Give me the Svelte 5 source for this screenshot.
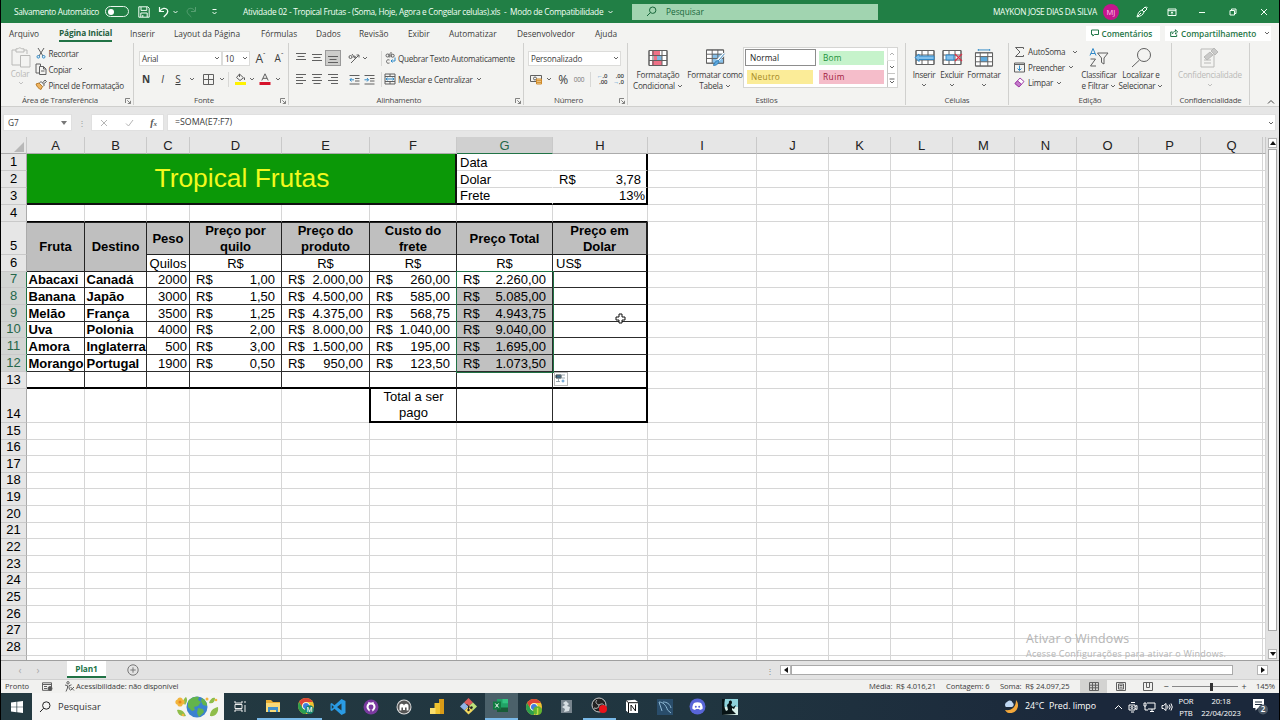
<script>
  const tabs = ['Arquivo', 'Página Inicial', 'Inserir', 'Layout da Página', 'Fórmulas', 'Dados', 'Revisão', 'Exibir', 'Automatizar', 'Desenvolvedor', 'Ajuda'];
  const columns = 'ABCDEFGHIJKLMNOPQ'.split('');
  const fruits = [
    ['Abacaxi', 'Canadá', '2000', '1,00', '2.000,00', '260,00', '2.260,00'],
    ['Banana', 'Japão', '3000', '1,50', '4.500,00', '585,00', '5.085,00'],
    ['Melão', 'França', '3500', '1,25', '4.375,00', '568,75', '4.943,75'],
    ['Uva', 'Polonia', '4000', '2,00', '8.000,00', '1.040,00', '9.040,00'],
    ['Amora', 'Inglaterra', '500', '3,00', '1.500,00', '195,00', '1.695,00'],
    ['Morango', 'Portugal', '1900', '0,50', '950,00', '123,50', '1.073,50']
  ];

  // Each cell: column, row, text, classes, column span, row span
  const cells = [];
  const put = (c, r, text, cls = '', cs = 1, rs = 1) => cells.push({ c, r, text, cls, cs, rs });
  put(1, 1, 'Tropical Frutas', 'banner', 6, 3);
  put(7, 1, 'Data', 'left noline');
  put(8, 1, '', 'edge noline');
  put(7, 2, 'Dolar', 'left noline');
  put(8, 2, '3,78', 'money edge noline');
  put(7, 3, 'Frete', 'left base');
  put(8, 3, '13%', 'right edge base');
  for (let c = 1; c < 9; c++) put(c, 4, '', 'base4');
  put(1, 5, 'Fruta', 'head', 1, 2);
  put(2, 5, 'Destino', 'head', 1, 2);
  put(3, 5, 'Peso', 'head');
  put(4, 5, 'Preço por quilo', 'head');
  put(5, 5, 'Preço do produto', 'head');
  put(6, 5, 'Custo do frete', 'head');
  put(7, 5, 'Preço Total', 'head');
  put(8, 5, 'Preço em Dolar', 'head edge');
  put(3, 6, 'Quilos', 'line center');
  for (let c = 4; c < 8; c++) put(c, 6, 'R$', 'line center');
  put(8, 6, 'US$', 'line left edge');
  fruits.forEach((f, i) => {
    const r = i + 7;
    put(1, r, f[0], 'line bold left');
    put(2, r, f[1], 'line bold left');
    put(3, r, f[2], 'line right');
    for (let c = 4; c < 8; c++) put(c, r, f[c - 1], 'line money' + (c === 7 && i ? ' picked' : ''));
    put(8, r, '', 'line edge');
  });
  for (let c = 1; c < 9; c++) put(c, 13, '', 'line base' + (c === 8 ? ' edge' : ''));
  put(6, 14, 'Total a ser pago', 'line base wrap leftedge');
  put(7, 14, '', 'line base');
  put(8, 14, '', 'line base edge');

  const filled = new Set();
  cells.forEach((k) => {
    for (let c = k.c; c < k.c + k.cs; c++) for (let r = k.r; r < k.r + k.rs; r++) filled.add(c + '-' + r);
  });
  const blanks = [];
  for (let r = 1; r < 30; r++) for (let c = 1; c < 19; c++) if (!filled.has(c + '-' + r)) blanks.push([c, r]);
  const rowNumbers = Array.from({ length: 29 }, (_, i) => i + 1);
  const apps = ['taskview', 'explorer', 'chrome', 'vscode', 'github', 'mendeley', 'powerbi', 'git', 'excel', 'chrome2', 'recycle', 'obs', 'notion', 'mysql', 'discord', 'kindle'];
</script>

{#snippet caret()}
  <svg class="caret" viewBox="0 0 6 6"><path d="M1 2l2 2 2-2" /></svg>
{/snippet}

{#snippet lines(rows)}
  <svg class="i" width="12" height="12" viewBox="0 0 12 12">
    {#each rows as [x1, x2, y]}<path d="M{x1} {y}H{x2}" />{/each}
  </svg>
{/snippet}

{#snippet launcher()}
  <svg class="launcher" viewBox="0 0 6 6"><path d="M.5 5V.5H5M2.3 2.3l3 3M5.5 2.8v2.7H2.8" /></svg>
{/snippet}

{#snippet chrome(badge, letter, ink)}
  <svg width="18" height="18" viewBox="0 0 18 18">
    <circle cx="9" cy="9" r="8" fill="#f1c232" />
    <path d="M2.1 5A8 8 0 0 1 15.9 5H9a4 4 0 0 0-3.6 5.6z" fill="#dc4437" />
    <path d="M2.1 5A8 8 0 0 0 8.5 17l3.5-6a4 4 0 0 1-6.5-.2z" fill="#2c9e4f" />
    <circle cx="9" cy="9" r="3.8" fill="#fff" /><circle cx="9" cy="9" r="3" fill="#3f7de0" />
    <circle cx="12.6" cy="12.6" r="4.4" fill={badge} />
    <text x="12.6" y="15" text-anchor="middle" font-size="6.5" fill={ink}>{letter}</text>
  </svg>
{/snippet}

<div class="window">
  <header class="titlebar">
    <span class="autosave">Salvamento Automático</span>
    <span class="toggle"><i></i></span>
    <svg width="12" height="12" viewBox="0 0 12 12"><path d="M.8.8h9l1.4 1.4v9H.8zM3 1v3.4h5.8V1M2.8 11V7h6.4v4M4.8 9v2" /></svg>
    <svg width="12" height="12" viewBox="0 0 12 12"><path d="M1.5 1v4.5H6M1.7 5.2C4 2 7.5 1.5 9.2 3.6c2 2.6-.8 4.8-3.5 7.4" stroke-width="1.2" /></svg>
    {@render caret()}
    <svg class="faded" width="12" height="12" viewBox="0 0 12 12"><path d="M10.5 1v4.5H6M10.3 5.2C8 2 4.5 1.5 2.8 3.6c-2 2.6.8 4.8 3.5 7.4" /></svg>
    <svg width="7" height="8" viewBox="0 0 7 8"><path d="M1.5 1.5h4M1.5 4l2 2 2-2" /></svg>
    <span class="doc">Atividade 02 - Tropical Frutas - (Soma, Hoje, Agora e Congelar celulas).xls&nbsp; -&nbsp; Modo de Compatibilidade</span>
    {@render caret()}
    <div class="find">
      <svg width="11" height="11" viewBox="0 0 11 11"><circle cx="6.7" cy="4.2" r="3.2" /><path d="M4.4 6.6L1 10" /></svg>
      <span>Pesquisar</span>
    </div>
    <span class="user">MAYKON JOSE DIAS DA SILVA</span>
    <span class="avatar">MJ</span>
    <svg width="12" height="12" viewBox="0 0 12 12"><path d="M1 11c1-4 2-6 5-7l2 2c-1 3-3 4-7 5zM6 4l3-3 2 2-3 3M2 10l3-3M10 .5l1.5 1.5" /></svg>
    <svg width="10" height="10" viewBox="0 0 10 10"><path d="M1 2h8v6.5H1zM1 3.7h8M5 7.5V5M3.8 6L5 4.9 6.2 6" /></svg>
    <svg width="8" height="8" viewBox="0 0 8 8"><path d="M1 4.5h6" /></svg>
    <svg width="8" height="8" viewBox="0 0 8 8"><path d="M1 2.5h4.5V7H1zM2.5 2.5V1H7v4.5H5.5" /></svg>
    <svg class="close" width="8" height="8" viewBox="0 0 8 8"><path d="M1 1l6 6M7 1L1 7" /></svg>
  </header>

  <nav class="tabs">
    {#each tabs as tab, i}<span class:active={i === 1}>{tab}</span>{/each}
    <b class="pill"><svg width="8" height="8" viewBox="0 0 8 8"><path d="M.5 1h7v4.5H3.5L1.8 7V5.5H.5z" /></svg>Comentários</b>
    <b class="pill share"><svg width="8" height="8" viewBox="0 0 8 8"><path d="M2.5 3H.7v4.5h6V5.5M2.5 5c.3-2 1.5-2.7 3-2.7V.7L7.6 3 5.5 5V3.6" /></svg>Compartilhamento {@render caret()}</b>
  </nav>

  <section class="ribbon">
    <div class="group clip">
      <div class="body">
        <div class="paste">
          <svg width="20" height="21" viewBox="0 0 20 21"><path d="M5 3H1v15h8M13 3h3v4M5 1.8h2C7.5.5 10 .5 10.5 1.8H13V5H5zM9.5 8.5H19V20H9.5z" /></svg>
          <span>Colar</span>{@render caret()}
        </div>
        <div class="stack">
          <span><svg class="i" width="12" height="12" viewBox="0 0 12 12"><path d="M3 1l5 8M9 1L4 9" /><g class="blue"><circle cx="3.3" cy="9.8" r="1.3" /><circle cx="8.7" cy="9.8" r="1.3" /></g></svg>Recortar</span>
          <span><svg class="i" width="12" height="12" viewBox="0 0 12 12"><path d="M4 10H1V1h4.5v2M4.5 3.5h4L11 6v5.5H4.5zM8.5 3.5V6H11M6 8h3.5" /></svg>Copiar {@render caret()}</span>
          <span><svg class="i" width="12" height="12" viewBox="0 0 12 12"><path d="M1 5l3-1 3.5 3.5-1.5 3C3.5 9.5 2 8 1 5z" fill="#efb45f" stroke="#b97d2c" /><path d="M4.5 4L6 2.5l3.5 3.5L8 7.5M7.5 4l2.5-3 1.5 1.5L8.5 5" /></svg>Pincel de Formatação</span>
        </div>
      </div>
      <footer><span>Área de Transferência</span>{@render launcher()}</footer>
    </div>

    <div class="group font">
      <div class="body rows">
        <div class="r1">
          <span class="select">Arial {@render caret()}</span><span class="select">10 {@render caret()}</span>
          <span class="big">A<sup>ˆ</sup></span><span class="small">A<sup>ˇ</sup></span>
        </div>
        <div class="r2">
          <b>N</b><i>I</i><u>S</u>{@render caret()}
          <svg class="i" width="11" height="11" viewBox="0 0 11 11"><path d="M.5.5h10v10H.5zM5.5.5v10M.5 5.5h10" /></svg>{@render caret()}
          <em></em>
          <svg class="i" width="11" height="12" viewBox="0 0 11 12"><path d="M4.5 1L8.5 4.8 5 7.5 1.5 4.5zM4.5 1v3M9.5 4.5v2.5" /><path d="M0 10.5h11" stroke="#fff200" stroke-width="3" /></svg>{@render caret()}
          <svg class="i" width="12" height="12" viewBox="0 0 12 12"><path d="M2.8 7.5L6 .8l3.2 6.7M4 5.3h4" /><path d="M.5 10.5h11" stroke="#d6132b" stroke-width="3" /></svg>{@render caret()}
        </div>
      </div>
      <footer><span>Fonte</span>{@render launcher()}</footer>
    </div>

    <div class="group align">
      <div class="body rows">
        <div class="r1">
          {@render lines([[1, 11, 1.5], [2.5, 9.5, 4.5], [1, 11, 7.5]])}
          {@render lines([[1, 11, 2.5], [2.5, 9.5, 5.5], [1, 11, 8.5]])}
          <span class="on">{@render lines([[1, 11, 4.5], [2.5, 9.5, 7.5], [1, 11, 10.5]])}</span>
          <svg class="i shift" width="12" height="12" viewBox="0 0 12 12"><circle cx="2.5" cy="5" r="1.5" /><path d="M4 2l3 4M7 6.5c2-2-1-3.5-2-1M3 11l8-8M8.5 3H11v2.5" /></svg>{@render caret()}
          <em></em>
          <svg class="i" width="11" height="12" viewBox="0 0 11 12"><circle cx="2.5" cy="3.5" r="1.5" /><path d="M4.2 1.5v4M6 0v5.2" /><circle cx="7.7" cy="3.7" r="1.5" /><path d="M4.5 8c-4-1.5-4 4.5 0 3" /><g class="blue"><path d="M10 5.5v3.5H6M7.5 7.5L6 9l1.5 1.5" /></g></svg>
          <span>Quebrar Texto Automaticamente</span>
        </div>
        <div class="r2">
          {@render lines([[1, 11, 1.5], [1, 8, 4.5], [1, 11, 7.5], [1, 8, 10.5]])}
          {@render lines([[1, 11, 1.5], [2.5, 9.5, 4.5], [1, 11, 7.5], [2.5, 9.5, 10.5]])}
          {@render lines([[1, 11, 1.5], [4, 11, 4.5], [1, 11, 7.5], [4, 11, 10.5]])}
          <svg class="i shift" width="11" height="11" viewBox="0 0 11 11"><path d="M.5 1.5h10M6 4.5h4.5M6 7h4.5M.5 10h10" /><g class="blue"><path d="M5 5.8H1M2.5 4L1 5.8l1.5 1.7" /></g></svg>
          <svg class="i" width="11" height="11" viewBox="0 0 11 11"><path d="M.5 1.5h10M6 4.5h4.5M6 7h4.5M.5 10h10" /><g class="blue"><path d="M.5 5.8H4.5M3 4l1.5 1.8L3 7.5" /></g></svg>
          <em></em>
          <svg class="i" width="12" height="12" viewBox="0 0 12 12"><path d="M1 1h10v10H1zM1 3.5h10M1 8.5h10M6 1v2.5M6 8.5V11" /><g class="blue"><path d="M2 6h8M3.5 4.7L2 6l1.5 1.3M8.5 4.7L10 6 8.5 7.3" /></g></svg>
          <span>Mesclar e Centralizar</span>{@render caret()}
        </div>
      </div>
      <footer><span>Alinhamento</span>{@render launcher()}</footer>
    </div>

    <div class="group number">
      <div class="body rows">
        <div class="r1"><span class="select">Personalizado {@render caret()}</span></div>
        <div class="r2">
          <svg class="i" width="13" height="11" viewBox="0 0 13 11"><path d="M.5 1.5h11v6H.5z" /><circle cx="5" cy="4.5" r="1.5" /><path d="M6.5 5h5v5h-5zM6.5 6.7h5M6.5 8.4h5" fill="#f5d9a4" stroke="#cf8a2a" /></svg>{@render caret()}
          <span class="pct">%</span><span class="zeros">000</span>
          <em></em>
          <span class="dec"><s>←</s>,0<br />,00</span><span class="dec">,00<br /><s>→</s>,0</span>
        </div>
      </div>
      <footer><span>Número</span>{@render launcher()}</footer>
    </div>

    <div class="group styles">
      <div class="body">
        <div class="tool">
          <svg class="i" width="20" height="17" viewBox="0 0 20 17"><path d="M1 1h18v15H1z" fill="#fff" /><path d="M4 1h8v5H4zM6 6h7v5H6zM4 11h10v5H4z" fill="#ef7187" stroke="none" /><path d="M9 6h5v5H9z" fill="#80b7df" stroke="none" /><path d="M1 1h18v15H1zM1 6h18M1 11h18M5 1v15M14 1v15" /></svg>
          <span>Formatação</span><span>Condicional {@render caret()}</span>
        </div>
        <div class="tool">
          <svg class="i" width="21" height="19" viewBox="0 0 21 19"><path d="M1 1h18v14H1z" fill="#fff" /><path d="M7 5h12v10H7z" fill="#88c1ea" stroke="none" /><path d="M1 1h18v14H1zM1 5.5h18M1 10h18M7 1v14M13 1v14" /><path d="M20 5l-8 8" stroke="#fff" stroke-width="3" /><path d="M20 5l-7 8M12.5 12c2 1 2 2 .5 3.5-2 2-4 2-5 1.5 2-1 1.5-4 4.5-5z" fill="#5ba5dc" stroke="#2f7fb8" /></svg>
          <span>Formatar como</span><span>Tabela {@render caret()}</span>
        </div>
        <div class="gallery">
          <span class="normal">Normal</span><span class="good">Bom</span>
          <span class="neutral">Neutro</span><span class="bad">Ruim</span>
          <div class="steps"><i class="off"><svg class="caret" viewBox="0 0 6 6"><path d="M1 4l2-2 2 2" /></svg></i><i>{@render caret()}</i><i><svg class="caret" viewBox="0 0 6 6"><path d="M.5 1h5M1 3l2 2 2-2" /></svg></i></div>
        </div>
      </div>
      <footer><span>Estilos</span></footer>
    </div>

    <div class="group cellsg">
      <div class="body">
        <div class="tool">
          <svg class="i" width="21" height="17" viewBox="0 0 21 17"><path d="M2 1h18v14H2z" fill="#fff" /><path d="M2 1h18v14H2zM2 5.5h18M2 10.5h18M8 1v14M14 1v14" /><path d="M1 8l4-3.5v2h15v3.5H5v2z" fill="#82c0ec" stroke="#2f87c7" /></svg>
          <span>Inserir</span>{@render caret()}
        </div>
        <div class="tool">
          <svg class="i" width="21" height="17" viewBox="0 0 21 17"><path d="M1 1h18v14H1z" fill="#fff" /><path d="M1 1h18v14H1zM1 5.5h18M1 10.5h18M7 1v14M13 1v14" /><path d="M4 5.5h8v5H4z" fill="#82c0ec" stroke="#2f87c7" /><path d="M13 4.5l7 7M20 4.5l-7 7" stroke="#d9344a" stroke-width="1.2" /></svg>
          <span>Excluir</span>{@render caret()}
        </div>
        <div class="tool">
          <svg class="i" width="20" height="19" viewBox="0 0 20 19"><path d="M4 1h12M4 0v2M16 0v2" stroke="#2f87c7" /><path d="M1 4h18v14H1z" fill="#fff" /><path d="M6 8h8v5.5H6z" fill="#5da9dd" stroke="none" /><path d="M1 4h18v14H1zM1 8h18M1 13.5h18M6 4v14M14 4v14" /></svg>
          <span>Formatar</span>{@render caret()}
        </div>
      </div>
      <footer><span>Células</span></footer>
    </div>

    <div class="group edit">
      <div class="body">
        <div class="stack">
          <span><svg class="i" width="11" height="12" viewBox="0 0 11 12"><path d="M9.5 3V1.5H1.5L6 6l-4.5 4.5h8V9" /></svg>AutoSoma &nbsp;{@render caret()}</span>
          <span><svg class="i" width="11" height="11" viewBox="0 0 11 11"><path d="M.5 1h10v9H.5zM.5 2.5h10" /><g class="blue"><path d="M5.5 3.5V8.5M3.5 6.5l2 2 2-2" /></g></svg>Preencher {@render caret()}</span>
          <span><svg class="i" width="11" height="11" viewBox="0 0 11 11"><path d="M6 1l4 3.5-5 5.5-4-3.5z" fill="#fff" stroke="#a03fa8" /><path d="M3.5 3.8l4 3.4L5 10 1 6.5z" fill="#c47bca" stroke="#a03fa8" /></svg>Limpar {@render caret()}</span>
        </div>
        <div class="tool">
          <svg class="i" width="20" height="20" viewBox="0 0 20 20"><path d="M1 8l3-7 3 7M2 6h4" stroke="#2f87c7" /><path d="M1.5 11.5h5l-5 7h5.5" /><path d="M8.5 5.5h10.5l-4 5v6l-2.5-1.5v-4.5z" /></svg>
          <span>Classificar</span><span>e Filtrar {@render caret()}</span>
        </div>
        <div class="tool">
          <svg class="i" width="21" height="20" viewBox="0 0 21 20"><circle cx="13" cy="7.5" r="6.5" /><path d="M8.5 12.5L1 19.5" /></svg>
          <span>Localizar e</span><span>Selecionar {@render caret()}</span>
        </div>
      </div>
      <footer><span>Edição</span></footer>
    </div>

    <div class="group conf">
      <div class="body">
        <div class="tool">
          <svg class="i" width="20" height="21" viewBox="0 0 20 21"><path d="M1 2h13v18H1zM4 13h7M4 16h7" /><path d="M4 10l6-5 3 3-6 5zM11 4l3-3 4 4-3 3z" fill="#c9c9c8" /></svg>
          <span>Confidencialidade</span>{@render caret()}
        </div>
      </div>
      <footer><span>Confidencialidade</span></footer>
    </div>
    <svg class="collapse" viewBox="0 0 8 6"><path d="M1 4.5l3-3 3 3" /></svg>
  </section>

  <section class="formula">
    <span class="namebox">G7<svg viewBox="0 0 6 4"><path d="M0 0h6L3 4z" /></svg></span>
    <span class="grip">⋮</span>
    <span class="fx">
      <svg width="8" height="8" viewBox="0 0 8 8"><path d="M1 1l6 6M7 1L1 7" /></svg>
      <svg width="9" height="8" viewBox="0 0 9 8"><path d="M1 4.5l2.5 2.5L8 1" /></svg>
      <i>f<small>x</small></i>
    </span>
    <span class="input">=SOMA(E7:F7){@render caret()}</span>
  </section>

  <section class="sheet">
    <div class="heads">
      <span class="corner"><svg viewBox="0 0 10 10"><path d="M10 0v10H0z" /></svg></span>
      {#each columns as c}<span class:hot={c === 'G'}>{c}</span>{/each}<span></span>
    </div>
    <div class="rownums">
      {#each rowNumbers as n}<span class:hot={n > 6 && n < 13}>{n === 29 ? '' : n}</span>{/each}
    </div>
    <div class="grid">
      {#each blanks as [c, r]}<div class="cell" style="grid-area:{r}/{c}"></div>{/each}
      {#each cells as k}
        <div class="cell {k.cls}" style="grid-area:{k.r}/{k.c}/span {k.rs}/span {k.cs}">
          {#if k.cls.includes('money')}<span>R$</span>{/if}<span>{k.text}</span>
        </div>
      {/each}
      <div class="selection"></div>
      <div class="autofill"><svg width="11" height="11" viewBox="0 0 11 11"><path d="M1 2h5v3H1z" fill="#3f6f8f" /><path d="M1 2h9M1 5h9M1 8.5h4M6 2v3M3.5 5v4" stroke="#8795a0" fill="none" /><path d="M6.5 8h3M8 6.5v3" stroke="#2f7fc0" /></svg></div>
      <svg class="cursor" viewBox="0 0 11 11"><path d="M4 1h3v3h3v3H7v3H4V7H1V4h3z" /></svg>
      <div class="activate"><p>Ativar o Windows</p><small>Acesse Configurações para ativar o Windows.</small></div>
    </div>
    <div class="vscroll"><i><svg viewBox="0 0 6 4"><path d="M0 4h6L3 0z" /></svg></i><b></b><i><svg viewBox="0 0 6 4"><path d="M0 0h6L3 4z" /></svg></i></div>
  </section>

  <section class="sheettabs">
    <span class="nav">‹</span><span class="nav">›</span><b>Plan1</b>
    <svg class="plus" width="12" height="12" viewBox="0 0 12 12"><circle cx="6" cy="6" r="5.2" /><path d="M3.3 6h5.4M6 3.3v5.4" /></svg>
    <span class="dots">⋮</span>
    <div class="hscroll"><i><svg viewBox="0 0 4 6"><path d="M4 0v6L0 3z" /></svg></i><b></b><i class="last"><svg viewBox="0 0 4 6"><path d="M0 0v6l4-3z" /></svg></i></div>
  </section>

  <footer class="status">
    <span>Pronto</span>
    <svg class="i" width="11" height="10" viewBox="0 0 11 10"><path d="M.5.8h9v7.5h-9zM.5 2.5h9M2 4.5h3M2 6.5h3" /><circle cx="8" cy="6.5" r="2" fill="#555" /></svg>
    <svg class="i" width="11" height="11" viewBox="0 0 11 11"><circle cx="4" cy="1.8" r="1.2" /><path d="M1 4l2.5.7V7L2 10.5M7.5 3.8L5 4.7V7l1.2 2M6.5 6l3.5 3.5M10 6L6.5 9.5" /></svg>
    <span class="acc">Acessibilidade: não disponível</span>
    <span>Média: &nbsp;R$ 4.016,21</span><span>Contagem: 6</span><span>Soma: &nbsp;R$ 24.097,25</span>
    <span class="view on"><svg class="i" width="10" height="9" viewBox="0 0 10 9"><path d="M.5.5h9v8h-9zM.5 3.2h9M.5 5.8h9M3.5.5v8M6.5.5v8" /></svg></span>
    <span class="view"><svg class="i" width="10" height="9" viewBox="0 0 10 9"><path d="M.5.5h9v8h-9zM2.5 2h5v5h-5zM3.5 3.5h3M3.5 5.2h3" /></svg></span>
    <span class="view"><svg class="i" width="10" height="9" viewBox="0 0 10 9"><path d="M.5.5h9v8h-9zM3.5.5v5h3v-5" /></svg></span>
    <span class="sign">−</span><span class="zoom"><i></i></span><span class="sign">+</span>
    <span>145%</span>
  </footer>

  <footer class="taskbar">
    <span class="start"><svg width="12" height="12" viewBox="0 0 12 12"><path d="M0 1.6l5.5-.8v4.9H0zM6.2.7L12 0v5.7H6.2zM0 6.3h5.5v4.9L0 10.4zM6.2 6.3H12V12l-5.8-.8z" fill="#fff" /></svg></span>
    <div class="search">
      <svg width="12" height="12" viewBox="0 0 12 12"><circle cx="7.3" cy="4.5" r="3.7" fill="none" stroke="#222" /><path d="M4.6 7.3L1 11" stroke="#222" /></svg>
      <span>Pesquisar</span>
      <svg class="earth" width="46" height="24" viewBox="0 0 46 24">
        <g fill="#8fbd4a"><path d="M3 15c4-1 7 1 9 6-5 1-8-1-9-6zM12 2c-3 2-3 5-1 8 2-3 3-5 1-8zM36 21c0-5 3-8 8-9 1 6-3 10-8 9zM35 8c1-4 4-6 6-5 0 4-2 6-6 5z" /></g>
        <g fill="#f2b53c"><circle cx="4" cy="7" r="2.6" /><circle cx="8" cy="7" r="2.6" /><circle cx="6" cy="5" r="2.6" /><circle cx="6" cy="9" r="2.6" /><circle cx="33" cy="4" r="1.5" /><circle cx="42" cy="5" r="1.3" /><circle cx="9" cy="20" r="1.3" /></g>
        <circle cx="6" cy="7" r="1.5" fill="#e88420" />
        <circle cx="23" cy="12" r="10.5" fill="#3b82cf" />
        <path d="M14 6c3-4 8-5 11-4l-1 3 3 2-3 4-4 1 1 3-3 1-4-4zM28 3c3 2 5 4 5 8l-4-1-2-4zM24 13l5 1 1 3-5 5-2-4z" fill="#63b44b" />
      </svg>
    </div>
    {#each apps as app}
      <span class="app {app}">
        {#if app === 'taskview'}
          <svg width="13" height="13" viewBox="0 0 13 13"><path d="M1 1v2h7V1M1 12v-2h7v2M1 4.5h7v4H1zM11 1v2M11 5v7" /></svg>
        {:else if app === 'explorer'}
          <svg width="16" height="14" viewBox="0 0 16 14"><path d="M1 1h5l2 2h7v10H1z" fill="#e9ad34" /><path d="M1 4h14v9H1z" fill="#f9da78" /><path d="M3 8h10v5h-2v-2H5v2H3z" fill="#4191cb" /></svg>
        {:else if app === 'chrome'}
          {@render chrome('#16836d', 'M', '#fff')}
        {:else if app === 'chrome2'}
          {@render chrome('#63b52f', 'J', '#f7ef5b')}
        {:else if app === 'vscode'}
          <svg width="16" height="16" viewBox="0 0 16 16"><path d="M11.5 0L15.5 2v12l-4 2L4.5 9.7 1.8 12 .5 11.2v-6.5L1.8 4l2.7 2.3zM11.5 4.5L7 8l4.5 3.5zM1.8 6v4L4 8z" fill="#2a9be4" fill-rule="evenodd" /></svg>
        {:else if app === 'github'}
          <svg width="16" height="16" viewBox="0 0 16 16"><circle cx="8" cy="8" r="7.5" fill="#7a3aa0" /><path d="M5.2 4.3l.3-1.6 1.5.9h2l1.5-.9.3 1.6a4.6 4.6 0 0 1-.6 7.6l-.9.5V10.3H6.7v2.1l-.9-.5a4.6 4.6 0 0 1-.6-7.6z" fill="#fff" /><ellipse cx="8" cy="8" rx="2.5" ry="2.4" fill="#7a3aa0" /></svg>
        {:else if app === 'mendeley'}
          <svg width="16" height="16" viewBox="0 0 16 16"><circle cx="8" cy="8" r="7.500" fill="#ddd" /><circle cx="8" cy="8" r="6.500" fill="#555" /><path d="M3.500 11.500V7.500a2.300 2.300 0 0 1 4.500-1a2.300 2.300 0 0 1 4.500 1v4h-1.900V8.500H9v2.500H7V8.500H5.400v3z" fill="#fff" /></svg>
        {:else if app === 'powerbi'}
          <svg width="15" height="17" viewBox="0 0 15 17"><path d="M10 1h5v15h-5z" fill="#d99b17" /><path d="M5.5 5H11v11H5.5z" fill="#efc32f" /><path d="M1 10h5.5v6H1z" fill="#f9df6e" /></svg>
        {:else if app === 'git'}
          <svg width="17" height="17" viewBox="0 0 17 17"><path d="M8.5 0L13 4.5 8.5 8.5 4 4.5z" fill="#dd5b5b" /><path d="M4 4.5l4.5 4L4.5 12.5 0 8.5z" fill="#90b4e7" /><path d="M13 4.5l4 4-4 4-4.5-4z" fill="#bee27a" /><path d="M8.5 8.5l4.5 4-4.5 4-4-4z" fill="#f1d85e" /><path d="M6.5 6l5 5M8.5 8v5" stroke="#222" /><circle cx="8.5" cy="12" r="1.2" fill="#222" /><circle cx="11.5" cy="9.5" r="1.2" fill="#222" /></svg>
        {:else if app === 'excel'}
          <svg width="16" height="15" viewBox="0 0 16 15"><path d="M4 1h11v13H4z" fill="#21a366" /><path d="M9.5 1H15v4.3H9.5z" fill="#33c481" /><path d="M4 9.5h11V14H4z" fill="#185c37" /><path d="M0 3.5h8v8H0z" fill="#107c41" /><path d="M2.3 5.5l3.3 4M5.6 5.5l-3.3 4" stroke="#fff" /></svg>
        {:else if app === 'recycle'}
          <svg width="13" height="15" viewBox="0 0 13 15"><path d="M1 1h11v13H1z" fill="#78858e" /><path d="M6 2l3 3-2 2 3 1-1 4-5 1 1-3-3-2 3-2-2-2z" fill="#d7dfe3" /></svg>
        {:else if app === 'obs'}
          <svg width="17" height="17" viewBox="0 0 17 17"><circle cx="8" cy="8" r="7" fill="#222" stroke="#ccc" /><path d="M8 8c-3-1-4-3-2-5M8 8c0 3-2 4-5 3M8 8c3-2 5-1 5 1" fill="none" stroke="#bbb" /><circle cx="12" cy="12" r="4" fill="#e9131a" /></svg>
        {:else if app === 'notion'}
          <svg width="14" height="15" viewBox="0 0 14 15"><path d="M1 1.5l9-.7 3 2.2v11H3.5L1 11.5z" fill="#fff" /><path d="M1 1.5l2.5 2.2H13M3.5 3.7V14M6 12V6l4.5 6V5.5" fill="none" stroke="#111" /></svg>
        {:else if app === 'mysql'}
          <svg width="16" height="16" viewBox="0 0 16 16"><path d="M0 0h16v16H0z" fill="#294d6b" /><path d="M2 3c4 0 7 3 8.5 8l3.5 3M2 3l3 9M6 3c4 0 7 2 8 6" fill="none" stroke="#8db8d4" /></svg>
        {:else if app === 'discord'}
          <svg width="17" height="17" viewBox="0 0 17 17"><circle cx="8.5" cy="8.5" r="8" fill="#5865d8" /><path d="M5 5c2-1 5-1 7 0 1.5 2 2 4.5 1.5 6L11 12l-1-1H7l-1 1-2.5-1C3 9.500 3.500 7 5 5z" fill="#fff" /><circle cx="6.8" cy="8.7" r="1" fill="#5865d8" /><circle cx="10.2" cy="8.7" r="1" fill="#5865d8" /></svg>
        {:else}
          <svg width="16" height="16" viewBox="0 0 16 16"><path d="M0 0h16v16H0z" fill="#8ed3dc" /><path d="M0 8h16v8H0z" fill="#d6efe9" /><path d="M0 16V0h3c-1 5-1 9 1 12l2-1-1-5 2-2c-1-2 2-4 3-1 0 2-1 2-1 3l2 2 3-2-2 4-2-1v2l4 4z" fill="#071315" /></svg>
        {/if}
      </span>
    {/each}
    <div class="tray">
      <svg width="16" height="16" viewBox="0 0 16 16"><path d="M12 1c5 6 0 14-7 13-2 0-3-2-4-3 7 1 11-3 11-10z" fill="#f3a83b" /><path d="M2 8a3 3 0 0 1 1-5 3 3 0 0 1 5.5.5A2.5 2.5 0 0 1 8 8z" fill="#bfd7f2" /></svg>
      <span class="weather">24°C &nbsp;Pred. limpo</span>
      <svg class="w" width="9" height="8" viewBox="0 0 9 8"><path d="M1 6l3.5-3.5L8 6" /></svg>
      <svg class="w" width="10" height="12" viewBox="0 0 10 12"><path d="M3 1.5h4M1 4h6v5H1zM7 5.5l2-1v4l-2-1M3 11h3" /><circle cx="4" cy="6.5" r="1" /></svg>
      <svg class="w" width="13" height="12" viewBox="0 0 13 12"><path d="M4 2h8v6H5M7 10.5h4M9 8v2M1 2h2v3H1zM2 5v4h3" /></svg>
      <svg class="w" width="12" height="10" viewBox="0 0 12 10"><path d="M1 3.5h1.5L5 1.5v7l-2.5-2H1zM6.5 3.5q1 1.5 0 3M8.2 2.5q2 2.5 0 5M10 1.5q2.5 3.5 0 7" /></svg>
      <span class="two">POR<br />PTB</span>
      <span class="two">20:18<br />22/04/2023</span>
      <svg width="17" height="17" viewBox="0 0 17 17"><path d="M1 1h11v9H6l-2.5 2.5V10H1z" fill="#fff" /><path d="M3 3.5h7v1H3zM3 6h7v1H3z" fill="#1b2a3b" /><circle cx="11" cy="11.5" r="5" fill="#4b5866" /><text x="11" y="14.3" font-size="8" text-anchor="middle" fill="#fff">2</text></svg>
    </div>
  </footer>
</div>

<style>
  :global(body) { margin: 0; background: #000; }
  .window { width: 1278px; height: 720px; padding: 0 1px; overflow: hidden; background: #000; font: 8.3px/11px "Open Sans", "Noto Sans", sans-serif; color: #3b3b3b; display: grid; grid-template-columns: 1278px; grid-template-rows: 23px 20px 64px 30px 523px 20px 13px 27px; white-space: nowrap; }
  svg { display: block; fill: none; stroke: currentColor; stroke-width: 1; flex: none; }
  .i { stroke: #606060; }
  .i .blue { stroke: #2f8bc9; }
  .caret { width: 6px; height: 6px; stroke: #555; stroke-width: .9; }
  text { stroke: none; font-family: "Open Sans", sans-serif; font-weight: 600; }

  .titlebar { background: #217f45; color: #f2fff5; display: flex; align-items: center; }
  .titlebar > * { flex: none; }
  .titlebar .caret { stroke: #fff; width: 7px; }
  .autosave { width: 86px; margin-left: 13px; letter-spacing: -.34px; }
  .toggle { width: 22px; height: 9px; border: 1px solid #e8f6ec; border-radius: 6px; margin: 0 9px 0 5px; display: flex; align-items: center; }
  .toggle i { width: 6px; height: 6px; border-radius: 50%; background: #fff; margin-left: 2px; }
  .toggle + svg + svg { margin: 0 2px 0 8px; }
  .faded { opacity: .25; margin-left: 6px; }
  .faded + svg { margin-left: 14px; }
  .doc { width: 364px; margin: 0 0 0 25px; letter-spacing: -.296px; }
  .find { box-sizing: border-box; width: 246px; height: 16px; margin-left: 18px; padding-left: 14px; background: #a1d4b0; color: #17663a; display: flex; align-items: center; gap: 9px; }
  .user { width: 104px; margin-left: 115px; letter-spacing: -.34px; }
  .avatar { width: 16px; height: 16px; border-radius: 50%; background: #c4158c; color: #ffc6ef; font-size: 7.5px; line-height: 16px; text-align: center; margin: 0 17px 0 6px; }
  .avatar + svg + svg { margin-left: 19px; }
  .avatar + svg + svg + svg { margin-left: 21px; }
  .avatar + svg + svg + svg + svg { margin-left: 23px; }
  .titlebar > .close { margin-left: 23px; }

  .tabs { background: #f3f3f1; display: grid; grid-template-columns: 50px 71px 44px 87px 55px 43px 49px 41px 68px 78px 490.5px 79.5px 106px; padding-left: 8px; align-items: center; }
  .tabs > span { justify-self: start; height: 19px; line-height: 19px; }
  .tabs > .active { font-weight: 700; color: #25603f; border-bottom: 2px solid #217346; height: 15px; margin-top: 0; line-height: 15px; letter-spacing: -.15px; }
  .pill { box-sizing: border-box; width: 74px; height: 15px; background: #fff; color: #1f7647; font-weight: 600; display: flex; align-items: center; gap: 3px; padding-left: 5px; letter-spacing: -.05px; }
  .share { width: 106px; }
  .share .caret { margin-left: 5px; }

  .ribbon { background: #f3f3f1; box-sizing: border-box; border-bottom: 1px solid #cfcfcd; display: grid; grid-template-columns: 133px 155px 235px 104px 278px 103px 163px 78px 29px; font-size: 8.1px; letter-spacing: -.22px; }
  .group { box-sizing: border-box; height: 62px; border-right: 1px solid #d0d0ce; display: grid; grid-template: 52px 10px / 100%; }
  .group footer { text-align: center; font-size: 7.9px; line-height: 11px; color: #4b4b4b; display: flex; }
  .group footer span { flex: 1; }
  .launcher { width: 6px; height: 6px; stroke: #666; stroke-width: .8; margin: 3px 2px 0 6px; }
  .body { display: flex; }
  .paste { width: 34px; padding: 4px 0 0 4px; box-sizing: border-box; display: flex; flex-direction: column; align-items: center; color: #b9b9b7; }
  .paste svg { margin-left: 2px; }
  .paste .caret { stroke: #bbb; margin-top: 1px; }
  .stack { display: flex; flex-direction: column; padding-top: 2px; }
  .stack > span { height: 16px; display: flex; align-items: center; gap: 1.5px; }
  .stack .caret { margin-left: 4px; }
  .clip .stack { letter-spacing: -.28px; }
  .rows { flex-direction: column; padding-top: 7px; }
  .rows > div { height: 16px; display: grid; align-items: center; justify-items: center; justify-content: start; }
  .rows > .r2 { margin-top: 5px; }
  .rows em { width: 1px; height: 15px; background: #d8d8d6; }
  .rows .select { box-sizing: border-box; width: 100%; height: 15px; background: #fff; border: 1px solid #dcdcda; display: flex; align-items: center; justify-content: space-between; padding: 0 1px 0 2px; letter-spacing: -.15px; }
  .font .r1 { grid-template-columns: 83px 28px 21px 16px; padding-left: 5px; }
  .font .r2 { grid-template-columns: 18px 15px 16px 11px 22px 5px 8px 17px 6px 20px 6px; padding-left: 3px; font-size: 10px; }
  .big { font-size: 12px; } .small { font-size: 10px; }
  sup { font-size: 7px; line-height: 0; }
  .align .r1 { grid-template-columns: 16px 16px 16px 20px 7px 14px 16px 118px; padding-left: 4px; letter-spacing: -.27px; }
  .align .r2 { grid-template-columns: 16px 16px 16px 20px 17px 4px 16px 75px 12px; padding-left: 4px; }
  .align em { justify-self: end; }
  .align .shift { margin-left: 6px; }
  .align .rows span { justify-self: start; }
  .align .rows .on { justify-self: center; background: #cdcdcb; outline: 1px solid #999; width: 14px; height: 14px; display: grid; place-items: center; }
  .number .r1 { grid-template-columns: 93px; padding-left: 4px; }
  .number .r2 { grid-template-columns: 14px 11px 18px 14px 8px 16px 17px; padding-left: 5px; }
  .pct { font-size: 12px; } .zeros { font-size: 6.5px; color: #777; }
  .dec { font-size: 6px; line-height: 6px; font-weight: 600; text-align: right; }
  .dec s { color: #2f8bc9; text-decoration: none; }
  .tool { display: flex; flex-direction: column; align-items: center; }
  .tool > svg:first-child { margin: 6px 0 2px; height: 18px; }
  .tool span { display: flex; align-items: center; gap: 2px; height: 11px; }
  .tool > .caret { margin-top: 2px; }
  .styles .tool:nth-child(1) { width: 60px; } .styles .tool:nth-child(2) { width: 54px; }
  .gallery { box-sizing: border-box; width: 155px; height: 41px; margin: 4px 0 0 1px; background: #fff; border: 1px solid #d5d5d3; display: grid; grid-template: 17px 17px / 71px 67px 10px; row-gap: 2px; column-gap: 1px; padding: 1px 0 0 1px; align-items: center; letter-spacing: 0; font-size: 8.3px; }
  .gallery > span { padding-left: 4px; height: 14px; line-height: 14px; }
  .gallery .normal { border: 1px solid #8d8d8d; height: 15px; line-height: 15px; padding-left: 4px; color: #222; }
  .good { background: #c6f3cb; color: #21903a; margin-left: 2px; letter-spacing: .2px; }
  .neutral { background: #fbec98; color: #a58820; margin: 0 3px 0 2px; letter-spacing: .3px; }
  .bad { background: #f5bdca; color: #a0183b; margin-left: 2px; letter-spacing: .5px; }
  .steps { grid-area: 1 / 3 / span 2 / 4; align-self: start; margin: -1px 0 0 2px; display: grid; grid-template-rows: repeat(3, 13px); }
  .steps i { display: grid; place-items: center; border-left: 1px solid #c6c6c4; border-bottom: 1px solid #c6c6c4; }
  .steps i:last-child { border-bottom: 0; }
  .off { opacity: .5; }
  .cellsg .body { padding-left: 3px; }
  .cellsg .tool:nth-child(1) { width: 30px; } .cellsg .tool:nth-child(2) { width: 26px; } .cellsg .tool:nth-child(3) { width: 38px; }
  .edit .stack { box-sizing: border-box; width: 69px; padding: 1px 0 0 5px; }
  .edit .stack > span { height: 15.5px; gap: 3px; }
  .edit .stack .caret { margin-left: 0; }
  .edit .tool:nth-child(2) { width: 42px; } .edit .tool:nth-child(3) { width: 42px; }
  .edit .tool > svg:first-child, .conf .tool > svg:first-child { margin: 4px 0 1px; height: 21px; }
  .conf .tool { width: 76px; color: #b9b9b7; } .conf .tool svg { stroke: #b9b9b7; }
  .collapse { width: 8px; height: 6px; margin: 56px 0 0 17px; stroke: #444; }

  .formula { background: #e6e6e6; display: flex; align-items: flex-start; padding: 7px 2px 0; }
  .formula > span { box-sizing: border-box; height: 17px; background: #fff; border: 1px solid #e0e0e0; display: flex; align-items: center; }
  .formula .namebox { width: 69px; padding: 0 4px; justify-content: space-between; }
  .namebox svg { width: 6px; height: 4px; fill: #777; stroke: none; }
  .formula .grip { width: 19px; background: none; border: 0; justify-content: center; color: #999; }
  .fx { width: 73px; padding: 0 6px 0 8px; justify-content: space-between; color: #b5b5b5; }
  .fx i { font: italic 700 10px "Liberation Serif", serif; color: #555; } .fx small { font-size: 7px; }
  .input { width: 1109px; margin-left: 3px; padding: 0 1px 0 7px; justify-content: space-between; font-size: 8.8px; }

  .sheet { display: grid; grid-template: 17px 506px / 26px 1239px 13px; overflow: hidden; font: 13px/16px "Liberation Sans", Arial, sans-serif; color: #000; background: #fff; }
  .heads { grid-area: 1 / 1 / 2 / 3; display: grid; grid-template-columns: 26px 58px 62px 43px 92px 88px 87px 96px 95px 109px 72px repeat(7, 62px) 3px; background: #e6e6e6; }
  .heads span { box-sizing: border-box; text-align: center; line-height: 18px; height: 17px; border-right: 1px solid #c9c9c9; border-bottom: 1px solid #ababab; color: #222; }
  .heads .hot { background: #d0d0d0; color: #25674a; border-bottom-color: #217346; }
  .corner svg { width: 10px; height: 10px; fill: #b8b8b8; stroke: none; margin: 5px 0 0 13px; }
  .rownums, .grid { display: grid; grid-template-rows: 17px 17px 17px 17px 33px 17px 16px 17px 17px 16px 17px 17px 17px 34px 17px 16px 17px 16px 17px 17px 16px 17px 17px 16px 17px 17px 16px 17px 17px; height: 506px; overflow: hidden; }
  .rownums { grid-area: 2 / 1; grid-template-columns: 26px; }
  .rownums span { box-sizing: border-box; background: #e6e6e6; border-right: 1px solid #ababab; border-bottom: 1px solid #c9c9c9; display: flex; align-items: flex-end; justify-content: center; line-height: 16px; }
  .rownums .hot { background: #d2d5d3; color: #25674a; border-right-color: #217346; }
  .grid { grid-area: 2 / 2; position: relative; grid-template-columns: 58px 62px 43px 92px 88px 87px 96px 95px 109px 72px repeat(7, 62px) 3px; }
  .cell { box-sizing: border-box; min-width: 0; border-right: 1px solid #d6d6d6; border-bottom: 1px solid #d6d6d6; display: flex; align-items: flex-end; line-height: 15px; }
  .line { border-color: #2c2c2c; }
  .center { justify-content: center; }
  .left { padding-left: 3px; }
  .right { justify-content: flex-end; padding-right: 2px; }
  .bold { font-weight: 700; padding-left: 1.5px; }
  .money { justify-content: space-between; padding: 0 6px; }
  .noline.left { border-right-color: transparent; }
  .edge { border-right: 2px solid #000; }
  .base { border-bottom: 2px solid #000; }
  .base.left { border-right-color: transparent; }
  .cell.right.edge { padding-right: 1px; }
  .cell.base { line-height: 14px; }
  .edge.money { padding-right: 5px; }
  .base4 { border-bottom: 1px solid #000; }
  .banner { background: #0b9807; color: #f2f91e; font-size: 26.4px; align-items: center; justify-content: center; border-right: 2px solid #111; border-bottom: 2px solid #111; padding-left: 2px; }
  .head { background: #bfbfbf; font-weight: 700; border-color: #222; border-top: 1px solid #222; align-items: center; justify-content: center; text-align: center; white-space: normal; padding: 0 8px; line-height: 16px; }
  .head > span { margin: 0 -6px; }
  .cell.wrap { white-space: normal; text-align: center; align-items: center; padding: 0 10px; line-height: 16.5px; }
  .leftedge { box-shadow: -1px 0 #000; border-left: 1px solid #000; }
  .picked { background: #c1c1c1; }
  .selection { position: absolute; left: 429px; top: 117px; width: 96px; height: 100px; border: 1px solid #217346; }
  .autofill { position: absolute; left: 527px; top: 218px; width: 12px; height: 12px; background: #fff; border: 1px solid #b8b8b8; }
  .autofill svg { stroke-width: .8; }
  .cursor { position: absolute; left: 588px; top: 159px; width: 11px; height: 11px; fill: #fff; stroke: #111; }
  .activate { position: absolute; left: 999px; top: 476px; color: #b5b5b5; font-family: "Open Sans", sans-serif; }
  .activate p { margin: 0; font-size: 12.4px; letter-spacing: .2px; line-height: 18px; }
  .activate small { display: block; font-size: 9px; line-height: 12px; letter-spacing: .25px; }
  .vscroll { background: #e2e2e2; grid-area: 1 / 3 / 3 / 4; display: flex; flex-direction: column; padding: 1px 2px; gap: 1px; }
  .vscroll i, .hscroll i { box-sizing: border-box; height: 10px; background: #fff; border: 1px solid #b5b5b5; display: grid; place-items: center; }
  .vscroll svg { width: 6px; height: 4px; } .hscroll svg { width: 4px; height: 6px; }
  .vscroll svg, .hscroll svg { fill: #111; stroke: none; }
  .vscroll b { box-sizing: border-box; height: 482px; background: #fff; border: 1px solid #a8a8a8; }
  .vscroll i:last-child { margin-top: auto; }

  .sheettabs { box-sizing: border-box; background: #e3e3e3; border-top: 1px solid #9f9f9f; border-bottom: 1px solid #d0d0d0; display: flex; align-items: center; }
  .nav { width: 18px; text-align: center; color: #aaa; font-size: 10px; }
  .nav:first-child { margin-left: 10px; }
  .sheettabs > b { align-self: flex-start; box-sizing: border-box; width: 39px; height: 17px; margin-left: 20px; background: #fff; border-bottom: 2px solid #217346; color: #217346; line-height: 16px; text-align: center; letter-spacing: -.1px; }
  .plus { color: #777; margin-left: 21px; }
  .dots { margin-left: 627px; width: 14px; color: #888; }
  .hscroll { display: flex; width: 488px; }
  .hscroll i { width: 11px; }
  .hscroll b { box-sizing: border-box; height: 10px; width: 442px; background: #fff; border: 1px solid #aaa; }
  .hscroll .last { margin-left: 24px; }

  .status { background: #f1f1ef; display: flex; align-items: center; font-size: 7.6px; letter-spacing: -.1px; }
  .status > span { flex: none; }
  .status > span:nth-child(1) { width: 37px; margin-left: 4px; letter-spacing: 0; }
  .status > svg + svg { margin-left: 11px; }
  .acc { width: 793px; margin-left: 1px; }
  .status > span:nth-child(5) { width: 77px; } .status > span:nth-child(6) { width: 54px; } .status > span:nth-child(7) { width: 80px; }
  .view { width: 27px; height: 13px; display: grid; place-items: center; }
  .view.on { background: #d3d3d1; }
  .status .sign { width: 10px; text-align: center; font-size: 9px; }
  .zoom { width: 66px; height: 8px; margin: 0 1px; display: flex; justify-content: center; background: linear-gradient(#888, #888) center / 100% 1px no-repeat; }
  .zoom i { width: 3px; background: #333; margin-left: 12px; }
  .status > span:last-child { margin-left: 7px; }

  .taskbar { background: linear-gradient(90deg, #243a41, #203540 55%, #1b283b 85%); display: flex; align-items: center; color: #fff; }
  .start { width: 31px; display: grid; place-items: center; }
  .start svg, .earth, .app svg, .tray svg:not(.w) { stroke: none; }
  .app.taskview svg { stroke: #eee; }
  .search { width: 192px; height: 27px; background: #f4f4f3; color: #333; display: flex; align-items: center; font-size: 9.4px; }
  .search > svg:first-child { margin: 0 7px 0 7px; }
  .search > span { width: 116px; }
  .app { flex: none; width: 32.65px; height: 27px; display: grid; place-items: center; box-sizing: border-box; }
  .explorer, .chrome, .excel, .obs { border-bottom: 2px solid #79b9e8; }
  .excel { background: #4b616a; }
  .tray { margin-left: auto; width: 275px; display: flex; align-items: center; }
  .weather { width: 89px; margin-left: 5px; font-size: 8.8px; }
  .w + .w { margin-left: 5px; }
  .two { width: 24px; text-align: center; font-size: 7.7px; line-height: 12px; margin-left: 1px; letter-spacing: -.15px; }
  .two + .two { width: 42px; margin: 0 10px 0 2px; }
</style>
